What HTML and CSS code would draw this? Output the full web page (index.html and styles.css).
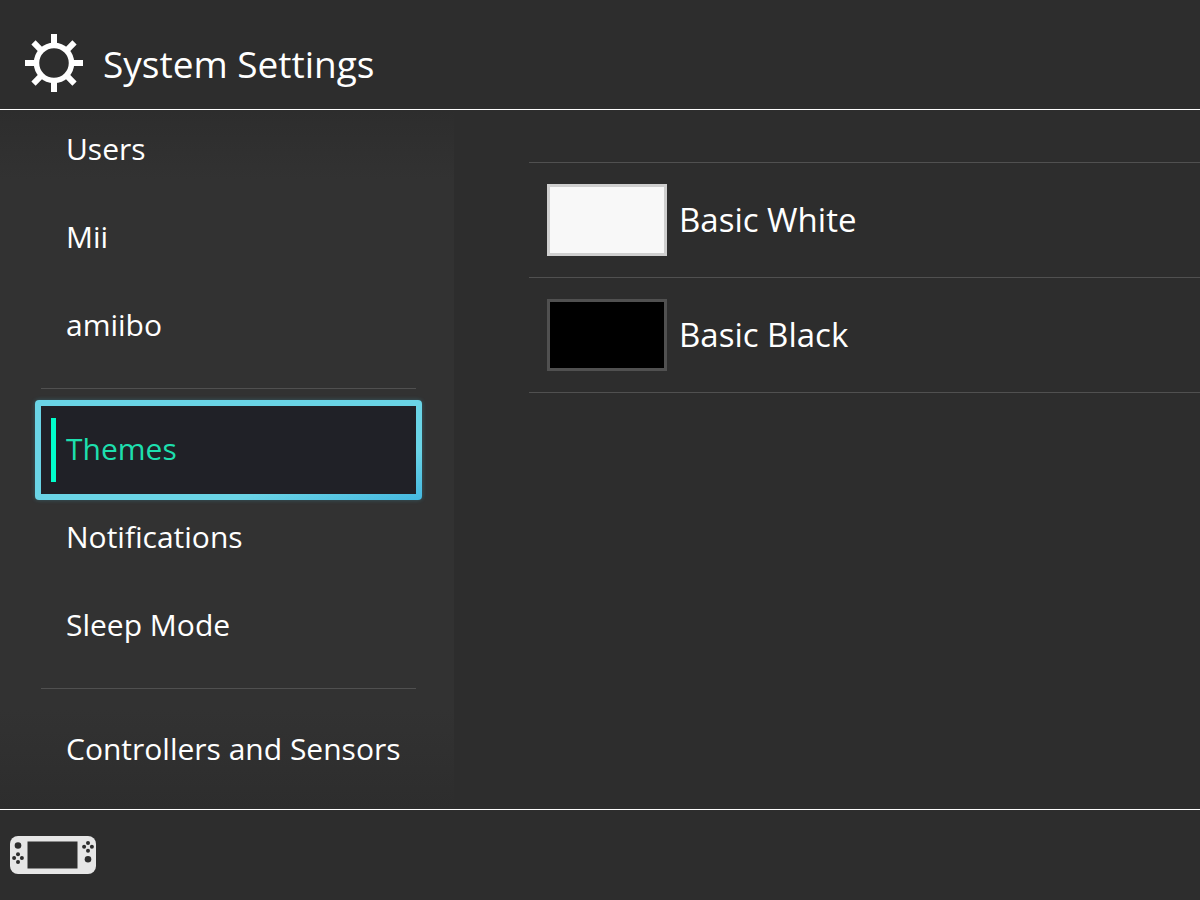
FILE: index.html
```html
<!DOCTYPE html>
<html lang="en">
<head>
    <meta charset="UTF-8">
    <meta name="viewport" content="width=device-width, initial-scale=1.0">
    <title>System Settings</title>
    <link rel="stylesheet" href="styles.css">
</head>
<body>
    <header class="header">
        <svg class="gear" viewBox="0 0 58 58" aria-hidden="true">
            <circle cx="29" cy="29" r="17.5" fill="none" stroke="#fff" stroke-width="5.5"/>
            <g fill="#fff">
                <path d="M26 0h6v11h-6zM26 47h6v11h-6zM0 26h11v6H0zM47 26h11v6H47z"/>
                <path d="M26 0h6v11h-6zM26 47h6v11h-6zM0 26h11v6H0zM47 26h11v6H47z" transform="rotate(45 29 29)"/>
            </g>
        </svg>
        <h1>System Settings</h1>
    </header>

    <main class="content">
        <nav class="menu">
            <button type="button">Users</button>
            <button type="button">Mii</button>
            <button type="button">amiibo</button>
            <hr>
            <button type="button" class="active">Themes</button>
            <button type="button">Notifications</button>
            <button type="button">Sleep Mode</button>
            <hr>
            <button type="button">Controllers and Sensors</button>
        </nav>

        <section class="themes">
            <button type="button"><span class="swatch white"></span>Basic White</button>
            <button type="button"><span class="swatch black"></span>Basic Black</button>
        </section>
    </main>

    <footer class="footer">
        <svg class="console" viewBox="0 0 86 38" aria-hidden="true">
            <rect width="86" height="38" rx="8" fill="#e6e6e6"/>
            <g fill="#2d2d2d">
                <rect x="17.5" y="5.5" width="50" height="27"/>
                <circle cx="8" cy="9.5" r="3.3"/>
                <circle cx="8" cy="18.2" r="2"/>
                <circle cx="8" cy="26" r="2"/>
                <circle cx="4.1" cy="22.1" r="2"/>
                <circle cx="11.9" cy="22.1" r="2"/>
                <circle cx="78" cy="6.9" r="2"/>
                <circle cx="78" cy="14.7" r="2"/>
                <circle cx="74.1" cy="10.8" r="2"/>
                <circle cx="81.9" cy="10.8" r="2"/>
                <circle cx="78" cy="23.3" r="3.3"/>
            </g>
        </svg>
    </footer>
</body>
</html>
```
FILE: styles.css
```css
* {
	box-sizing: border-box;
}

body {
	margin: 0;
	min-height: 100vh;
	display: flex;
	flex-direction: column;
	background: #2d2d2d;
	color: #fff;
	font-family: "Open Sans", "Noto Sans", sans-serif;
}

button {
	background: none;
	border: none;
	color: inherit;
	font-family: inherit;
	text-align: left;
	cursor: pointer;
}

.header {
	display: flex;
	align-items: center;
	gap: 20px;
	height: 110px;
	padding: 17px 25px 0;
	border-bottom: 1px solid #fff;
}

.gear {
	width: 58px;
	height: 58px;
}

.header h1 {
	margin: 0;
	font-size: 37px;
	font-weight: 400;
}

.content {
	flex: 1;
	display: grid;
	grid-template-columns: 454px 1fr;
}

.menu {
	display: flex;
	flex-direction: column;
	padding: 0 38px 0 41px;
	background: linear-gradient(#2d2d2d, #323232 70px, #323232 calc(100% - 100px), #2d2d2d);
}

.menu button {
	height: 80px;
	padding: 0 0 4px 25px;
	font-size: 30px;
	white-space: nowrap;
}

.menu button + button {
	margin-top: 8px;
}

.menu hr {
	width: 100%;
	height: 1px;
	margin: 22px 0 21px;
	border: none;
	background: #505050;
}

.menu .active {
	position: relative;
	z-index: 0;
	color: #1ddfae;
}

/* cursor frame around the selected item */
.menu .active::before {
	content: "";
	position: absolute;
	z-index: -1;
	inset: -10px -6px;
	border: 6px solid transparent;
	border-radius: 4px;
	background: linear-gradient(#202127, #202127) padding-box,
		linear-gradient(165deg, #6ad4e6 75%, #44b8e0) border-box;
	box-shadow: 0 0 4px rgba(70, 190, 220, 0.3);
}

.menu .active::after {
	content: "";
	position: absolute;
	top: 8px;
	bottom: 8px;
	left: 10px;
	width: 5px;
	background: #00ffcb;
}

.themes {
	padding: 52px 0 0 75px;
}

.themes button {
	display: flex;
	align-items: center;
	gap: 12px;
	width: 100%;
	padding: 21px 18px;
	border-bottom: 1px solid #505050;
	font-size: 33px;
	line-height: 40px;
}

.themes button:first-child {
	border-top: 1px solid #505050;
}

.swatch {
	width: 120px;
	height: 72px;
	border: 3px solid #cfcfcf;
}

.white {
	background: #f8f8f8;
}

.black {
	border-color: #505050;
	background: #000;
}

.footer {
	display: flex;
	align-items: center;
	height: 91px;
	padding: 0 10px;
	border-top: 1px solid #fff;
}

.console {
	width: 86px;
	height: 38px;
}
```
